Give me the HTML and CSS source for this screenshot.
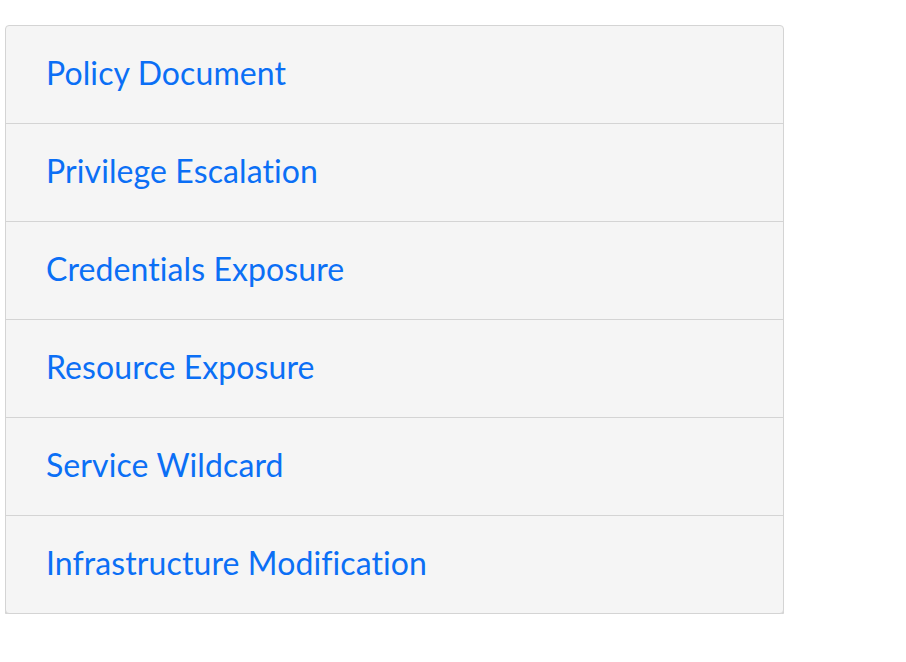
FILE: index.html
```html
<!DOCTYPE html>
<html>
<head>
<meta charset="utf-8">
<link rel="stylesheet" href="styles.css">
</head>
<body>
<div class="panel">
  <a class="item" href="#">Policy Document</a>
  <a class="item" href="#">Privilege Escalation</a>
  <a class="item" href="#">Credentials Exposure</a>
  <a class="item" href="#">Resource Exposure</a>
  <a class="item" href="#">Service Wildcard</a>
  <a class="item" href="#">Infrastructure Modification</a>
</div>
</body>
</html>
```

FILE: styles.css
```css
html, body {
  margin: 0;
  padding: 0;
  background: #ffffff;
}
body {
  padding: 25px 0 0 5px;
  font-family: "Lato", "Open Sans", sans-serif;
}
.panel {
  width: 777px;
  border: 1px solid #d4d4d4;
  border-radius: 4px;
  background: #f5f5f5;
  box-shadow: 0 2px 0 #d4d4d4;
  display: flex;
  flex-direction: column;
  overflow: hidden;
}
.item {
  display: flex;
  align-items: center;
  height: 93px;
  padding: 0 0 4px 40px;
  border-top: 1px solid #d4d4d4;
  color: #0b6ff5;
  text-decoration: none;
  font-size: 32px;
  font-variant-ligatures: none;
  letter-spacing: 0.1px;
}
.item:first-child {
  border-top: none;
}
```
